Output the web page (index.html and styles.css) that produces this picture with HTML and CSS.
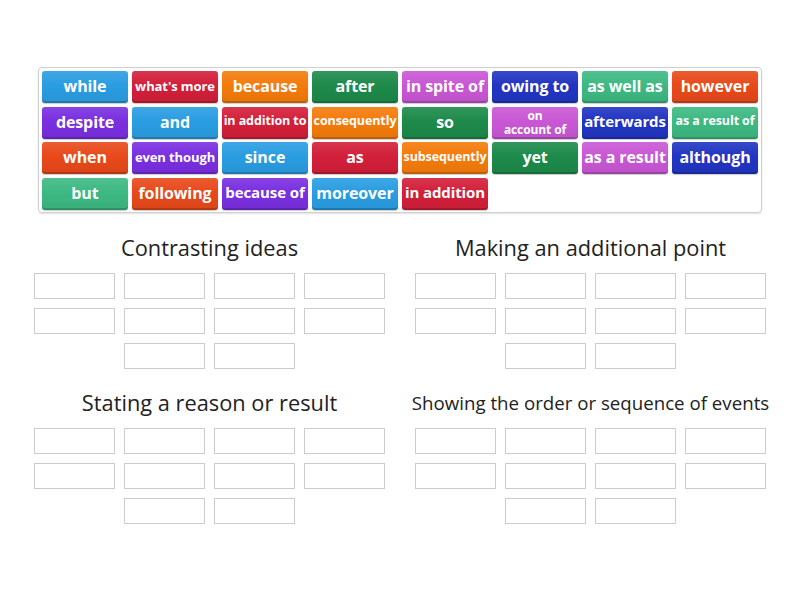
FILE: index.html
```html
<!DOCTYPE html>
<html>
<head>
<meta charset="utf-8">
<link rel="stylesheet" href="styles.css">
</head>
<body>
<div class="page">
  <div class="bank">
    <div class="tile blue">while</div>
    <div class="tile red s13">what's more</div>
    <div class="tile orange">because</div>
    <div class="tile green">after</div>
    <div class="tile pink">in spite of</div>
    <div class="tile navy">owing to</div>
    <div class="tile teal">as well as</div>
    <div class="tile redor">however</div>

    <div class="tile purple">despite</div>
    <div class="tile blue">and</div>
    <div class="tile red s12">in addition to</div>
    <div class="tile orange s12">consequently</div>
    <div class="tile green">so</div>
    <div class="tile pink s12 two">on<br>account of</div>
    <div class="tile navy s15">afterwards</div>
    <div class="tile teal s12">as a result of</div>

    <div class="tile redor">when</div>
    <div class="tile purple s13">even though</div>
    <div class="tile blue">since</div>
    <div class="tile red">as</div>
    <div class="tile orange s12">subsequently</div>
    <div class="tile green">yet</div>
    <div class="tile pink">as a result</div>
    <div class="tile navy">although</div>

    <div class="tile teal">but</div>
    <div class="tile redor">following</div>
    <div class="tile purple s15">because of</div>
    <div class="tile blue">moreover</div>
    <div class="tile red s15">in addition</div>
  </div>

  <div class="groups">
    <section class="group">
      <h2 class="title">Contrasting ideas</h2>
      <div class="slots">
        <div class="slot"></div><div class="slot"></div><div class="slot"></div><div class="slot"></div>
        <div class="slot"></div><div class="slot"></div><div class="slot"></div><div class="slot"></div>
        <div class="slot"></div><div class="slot"></div>
      </div>
    </section>
    <section class="group">
      <h2 class="title">Making an additional point</h2>
      <div class="slots">
        <div class="slot"></div><div class="slot"></div><div class="slot"></div><div class="slot"></div>
        <div class="slot"></div><div class="slot"></div><div class="slot"></div><div class="slot"></div>
        <div class="slot"></div><div class="slot"></div>
      </div>
    </section>
    <section class="group">
      <h2 class="title">Stating a reason or result</h2>
      <div class="slots">
        <div class="slot"></div><div class="slot"></div><div class="slot"></div><div class="slot"></div>
        <div class="slot"></div><div class="slot"></div><div class="slot"></div><div class="slot"></div>
        <div class="slot"></div><div class="slot"></div>
      </div>
    </section>
    <section class="group">
      <h2 class="title small">Showing the order or sequence of events</h2>
      <div class="slots">
        <div class="slot"></div><div class="slot"></div><div class="slot"></div><div class="slot"></div>
        <div class="slot"></div><div class="slot"></div><div class="slot"></div><div class="slot"></div>
        <div class="slot"></div><div class="slot"></div>
      </div>
    </section>
  </div>
</div>
</body>
</html>
```

FILE: styles.css
```css
html, body {
  margin: 0;
  padding: 0;
  background: #ffffff;
}

body {
  font-family: "Open Sans", "Liberation Sans", sans-serif;
}

.page {
  width: 800px;
  height: 600px;
  padding-top: 67px;
  box-sizing: border-box;
}

.bank {
  margin-left: 38px;
  width: 724px;
  height: 146px;
  box-sizing: border-box;
  border: 1px solid #cfcfcf;
  border-radius: 4px;
  box-shadow: 0 1px 2px rgba(0,0,0,0.12);
  padding: 3px;
  display: grid;
  grid-template-columns: repeat(8, 86px);
  grid-auto-rows: 32px;
  column-gap: 4px;
  row-gap: 3.6px;
  align-content: start;
}

.tile {
  display: flex;
  flex-direction: column;
  align-items: center;
  justify-content: center;
  text-align: center;
  color: #ffffff;
  font-weight: 700;
  font-size: 16px;
  line-height: 1;
  white-space: nowrap;
  border-radius: 3px;
  padding-bottom: 2px;
  box-sizing: border-box;
  box-shadow: inset 0 -2px 0 rgba(0,0,0,0.18), 0 1px 1px rgba(0,0,0,0.2);
  background-image: linear-gradient(to bottom, rgba(255,255,255,0.10), rgba(255,255,255,0) 45%, rgba(0,0,0,0.06));
  letter-spacing: -0.1px;
}

.s15 { font-size: 15px; }
.s13 { font-size: 13px; }
.s12 { font-size: 12.5px; }
.two { font-size: 12px; line-height: 14px; padding-top: 1px; padding-bottom: 1px; }

.blue   { background-color: #2a9de2; }
.red    { background-color: #d31f3a; }
.orange { background-color: #f47b0b; }
.green  { background-color: #1d8a4a; }
.pink   { background-color: #c957d5; }
.navy   { background-color: #2135c2; }
.teal   { background-color: #3db983; }
.redor  { background-color: #e8491a; }
.purple { background-color: #7a2fe0; }

.groups {
  margin-top: 20px;
  margin-left: 34px;
  display: grid;
  grid-template-columns: 351px 351px;
  column-gap: 30px;
  row-gap: 19px;
}

.group {
  display: flex;
  flex-direction: column;
  align-items: center;
}

.title {
  margin: 0 0 9px 0;
  height: 30px;
  line-height: 30px;
  font-size: 21.8px;
  font-weight: 400;
  color: #222222;
  white-space: nowrap;
}

.title.small {
  font-size: 18.7px;
}

.slots {
  width: 351px;
  display: flex;
  flex-wrap: wrap;
  justify-content: center;
  column-gap: 9px;
  row-gap: 9px;
  margin-top: 1px;
}

.slot {
  width: 81px;
  height: 26px;
  box-sizing: border-box;
  border: 1px solid #cccccc;
  background: #ffffff;
}
```
